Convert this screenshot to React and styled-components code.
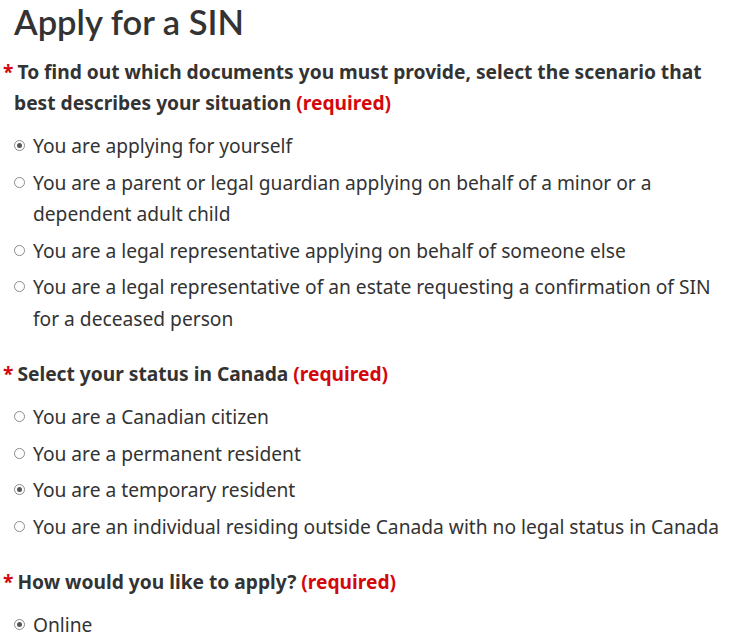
import React, { useState } from 'react';
import styled, { createGlobalStyle } from 'styled-components';

const GlobalStyle = createGlobalStyle`
  html, body {
    margin: 0;
    padding: 0;
    background: #fff;
  }
  body {
    font-family: 'Noto Sans', 'Open Sans', sans-serif;
    color: #333;
  }
`;

const Page = styled.main`
  padding: 0 18px 0 14px;
`;

const Title = styled.h1`
  font-family: Lato, 'Noto Sans', sans-serif;
  font-weight: 600;
  font-size: 34.5px;
  line-height: 44px;
  color: #333;
  margin: 0 0 12px;
`;

const Fieldset = styled.fieldset`
  border: 0;
  margin: 0 0 ${p => p.$gap || 0}px;
  padding: 0;
  min-width: 0;
`;

const Legend = styled.legend`
  padding: 0;
  font-size: 19.2px;
  font-weight: 700;
  line-height: 31px;
  color: #333;
  text-indent: -11px;
  margin: 0 0 12px;
`;

const Star = styled.span`
  color: #d3080c;
  margin-right: 4px;
`;

const Required = styled.strong`
  color: #d3080c;
  font-weight: 700;
`;

const Options = styled.ul`
  list-style: none;
  margin: 0;
  padding: 0;
  display: flex;
  flex-direction: column;
  gap: 5px;
`;

const Option = styled.li`
  display: flex;
  align-items: flex-start;
  gap: 8px;
  font-size: 19.2px;
  line-height: 31.5px;
  color: #333;
  cursor: pointer;
`;

const Dot = styled.span`
  flex: none;
  width: 11px;
  height: 11px;
  margin-top: 10px;
  box-sizing: border-box;
  border-radius: 50%;
  border: 1px solid #8a8a8a;
  display: flex;
  align-items: center;
  justify-content: center;
  background: #fff;

  &::after {
    content: '';
    width: 5px;
    height: 5px;
    border-radius: 50%;
    background: ${p => (p.$checked ? '#555' : 'transparent')};
  }
`;

const groups = [
  {
    id: 'scenario',
    label:
      'To find out which documents you must provide, select the scenario that best describes your situation',
    options: [
      'You are applying for yourself',
      'You are a parent or legal guardian applying on behalf of a minor or a dependent adult child',
      'You are a legal representative applying on behalf of someone else',
      'You are a legal representative of an estate requesting a confirmation of SIN for a deceased person',
    ],
    initial: 0,
    gap: 24,
  },
  {
    id: 'status',
    label: 'Select your status in Canada',
    options: [
      'You are a Canadian citizen',
      'You are a permanent resident',
      'You are a temporary resident',
      'You are an individual residing outside Canada with no legal status in Canada',
    ],
    initial: 2,
    gap: 24,
  },
  {
    id: 'method',
    label: 'How would you like to apply?',
    options: ['Online'],
    initial: 0,
    gap: 0,
  },
];

const RadioGroup = ({ group }) => {
  const [value, setValue] = useState(group.initial);
  return (
    <Fieldset $gap={group.gap}>
      <Legend>
        <Star>*</Star>
        {group.label} <Required>(required)</Required>
      </Legend>
      <Options role="radiogroup">
        {group.options.map((opt, i) => (
          <Option key={i} role="radio" aria-checked={value === i} onClick={() => setValue(i)}>
            <Dot $checked={value === i} />
            <span>{opt}</span>
          </Option>
        ))}
      </Options>
    </Fieldset>
  );
};

export default function App() {
  return (
    <>
      <GlobalStyle />
      <Page>
        <Title>Apply for a SIN</Title>
        {groups.map(g => (
          <RadioGroup key={g.id} group={g} />
        ))}
      </Page>
    </>
  );
}
